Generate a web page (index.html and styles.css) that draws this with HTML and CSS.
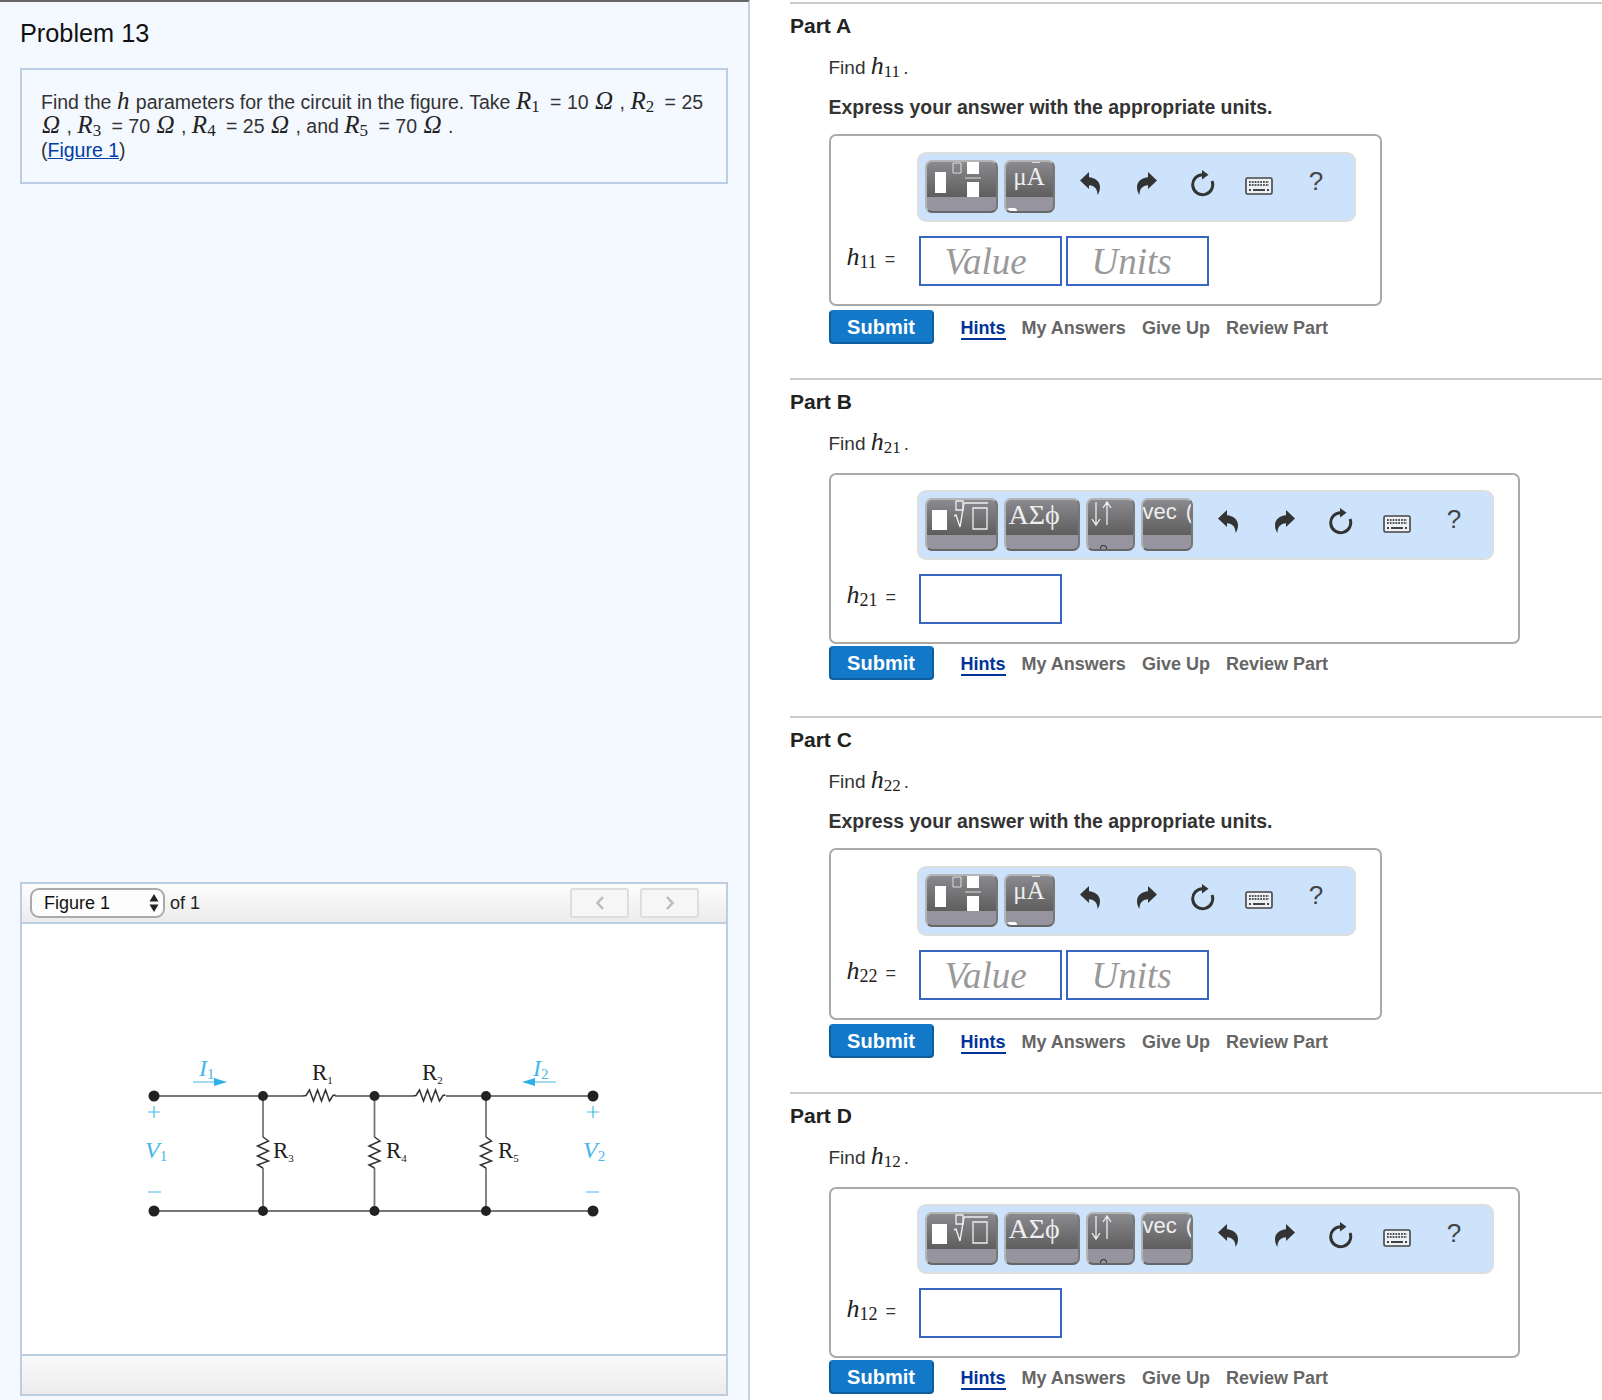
FILE: index.html
```html
<!DOCTYPE html>
<html lang="en">
<head>
<meta charset="utf-8">
<title>Problem 13</title>
<link rel="stylesheet" href="styles.css">
</head>
<body>
<svg class="defs" width="0" height="0" aria-hidden="true">
  <symbol id="undo" viewBox="0 0 20 23"><path d="M0 8.500 9 0v5.200c6 .4 11 4 11 10 0 3.500-1.200 6-2.500 7.800.3-5.500-3-9.500-8.500-9.700V17z"/></symbol>
  <symbol id="reload" viewBox="0 0 26 28"><path d="M11.700 5.700A10 10 0 1 0 21 12" fill="none" stroke="#333" stroke-width="3"/><path d="M11 1 17.500 5.700 11 10.500z"/></symbol>
  <symbol id="kbd" viewBox="0 0 28 18"><rect x="1" y="1" width="26" height="16" rx="1.500" fill="#eef2f6" stroke="#444" stroke-width="1.600"/><path d="M4 5h20M4 8h20" stroke="#555" stroke-width="1.800" stroke-dasharray="1.800 1"/><path d="M8 13h12M4 13h2M22 13h2" stroke="#444" stroke-width="1.800"/></symbol>
  <symbol id="frac" viewBox="0 0 69 36"><path d="M8 10h11v21H8zM40 0h12v12H40zM40 20h12v15H40z" fill="#fff"/><path d="M26 1h8v10h-8z" fill="none" stroke="#ddd"/><path d="M38 16h16" stroke="#ddd"/></symbol>
  <symbol id="root" viewBox="0 0 69 36"><path d="M5 10h15v20H5z" fill="#fff"/><path d="M29 1h7v9h-7zM46 8h14v21H46z" fill="none" stroke="#eee" stroke-width="1.300"/><path d="M27 16l2-1 4 12 4-24h24" fill="none" stroke="#eee" stroke-width="1.400"/></symbol>
  <symbol id="arrows" viewBox="0 0 45 34"><path d="M8 2v22M4 19l4 6 4-6M19 25V3M15 8l4-6 4 6" fill="none" stroke="#eee" stroke-width="1.300"/></symbol>
</svg>
<div class="page">
  <aside class="left">
    <h1 class="title">Problem 13</h1>
    <div class="desc">Find the <i class="m big">h</i> parameters for the circuit in the figure. Take <i class="m big">R<sub>1</sub></i> = 10 <i class="m om">Ω</i> , <i class="m big">R<sub>2</sub></i> = 25<br>
      <i class="m om">Ω</i> , <i class="m big">R<sub>3</sub></i> = 70 <i class="m om">Ω</i> , <i class="m big">R<sub>4</sub></i> = 25 <i class="m om">Ω</i> , and <i class="m big">R<sub>5</sub></i> = 70 <i class="m om">Ω</i> .<br>
      (<a class="link" href="#">Figure 1</a>)</div>
    <section class="figure">
      <div class="fig-head">
        <div class="select"><span>Figure 1</span><svg width="10" height="18" viewBox="0 0 10 18"><path d="M5 0l4.500 7.500h-9zM5 18 .5 10.500h9z" fill="#222"/></svg></div>
        <span class="of">of 1</span>
        <div class="nav"><svg width="10" height="16" viewBox="0 0 10 16"><path d="M8 2 2.500 8 8 14" fill="none" stroke="#bbb" stroke-width="2.500"/></svg></div>
        <div class="nav"><svg width="10" height="16" viewBox="0 0 10 16"><path d="M2 2 7.500 8 2 14" fill="none" stroke="#bbb" stroke-width="2.500"/></svg></div>
      </div>
      <div class="fig-body">
        <svg class="circuit" viewBox="22 924 704 432" width="704" height="432">
          <g fill="none" stroke="#777">
            <path stroke-width="2.200" d="M154 1096H303M335 1096H413M446 1096H593M154 1211H593"/>
            <path stroke-width="1.800" d="M263 1096V1137M263 1168V1211M374.500 1096V1137M374.500 1168V1211M486 1096V1137M486 1168V1211"/>
          </g>
          <g fill="none" stroke="#333" stroke-width="1.500">
            <path d="M303 1096l3-.5 3.500-5.500 4 11 4-11 4 11 4-11 4 11 3.500-5.500 2.500-.5"/>
            <path d="M413 1096l3-.5 3.500-5.500 4 11 4-11 4 11 4-11 4 11 3.500-5.500 2.500-.5"/>
            <path d="M263 1137l5.500 4-11 5 11 5-11 5 11 5-11 4 5.500 3"/>
            <path d="M374.500 1137l5.500 4-11 5 11 5-11 5 11 5-11 4 5.500 3"/>
            <path d="M486 1137l5.500 4-11 5 11 5-11 5 11 5-11 4 5.500 3"/>
          </g>
          <g fill="#222">
            <circle cx="154" cy="1096" r="5.500"/><circle cx="263" cy="1096" r="5"/><circle cx="374.500" cy="1096" r="5"/><circle cx="486" cy="1096" r="5"/><circle cx="593" cy="1096" r="5.500"/>
            <circle cx="154" cy="1211" r="5.500"/><circle cx="263" cy="1211" r="5"/><circle cx="374.500" cy="1211" r="5"/><circle cx="486" cy="1211" r="5"/><circle cx="593" cy="1211" r="5.500"/>
          </g>
          <g class="rl">
            <text x="312" y="1080">R<tspan class="rs" dy="4">1</tspan></text>
            <text x="422" y="1080">R<tspan class="rs" dy="4">2</tspan></text>
            <text x="273" y="1158">R<tspan class="rs" dy="4">3</tspan></text>
            <text x="386" y="1158">R<tspan class="rs" dy="4">4</tspan></text>
            <text x="498" y="1158">R<tspan class="rs" dy="4">5</tspan></text>
          </g>
          <g class="cl">
            <text x="199" y="1076">I<tspan class="cs" dy="3">1</tspan></text>
            <text x="533" y="1076">I<tspan class="cs" dy="3">2</tspan></text>
            <text x="145" y="1158">V<tspan class="cs" dy="3">1</tspan></text>
            <text x="583" y="1158">V<tspan class="cs" dy="3">2</tspan></text>
          </g>
          <g fill="none" stroke="#46b8e8" stroke-width="1.200">
            <path d="M193 1082h22M534 1082h22M148 1112h12M154 1106v12M587 1112h12M593 1106v12M148 1192h13M586 1192h13"/>
          </g>
          <path d="M214 1078l13 4-13 4zM535 1078l-13 4 13 4z" fill="#2fb0e8"/>
        </svg>
      </div>
      <div class="fig-foot"></div>
    </section>
  </aside>
  <main class="right">

    <section class="part">
      <h2>Part A</h2>
      <div class="body">
        <p class="find">Find <i class="m h">h<sub>11</sub></i>.</p>
        <p class="express">Express your answer with the appropriate units.</p>
        <div class="box">
          <div class="toolbar">
            <div class="btn w73"><svg width="69" height="36"><use href="#frac"/></svg></div>
            <div class="btn w51"><span class="serif">μ<span class="over">A</span></span><span class="mark"></span></div>
            <div class="tools">
              <span class="tool"><svg class="ic" width="20" height="23"><use href="#undo"/></svg></span>
              <span class="tool"><svg class="ic flip" width="20" height="23"><use href="#undo"/></svg></span>
              <span class="tool"><svg class="ic" width="26" height="28"><use href="#reload"/></svg></span>
              <span class="tool"><svg class="ic kb" width="28" height="18"><use href="#kbd"/></svg></span>
              <span class="tool q">?</span>
            </div>
          </div>
          <div class="answer">
            <span class="lab"><i class="m h">h<sub>11</sub></i> =</span>
            <span class="input">Value</span><span class="input">Units</span>
          </div>
        </div>
        <div class="actions"><span class="submit">Submit</span><a class="hint" href="#">Hints</a><span>My Answers</span><span>Give Up</span><span>Review Part</span></div>
      </div>
    </section>

    <section class="part">
      <h2>Part B</h2>
      <div class="body">
        <p class="find">Find <i class="m h">h<sub>21</sub></i>.</p>
        <div class="box gap">
          <div class="toolbar">
            <div class="btn w73"><svg width="69" height="36"><use href="#root"/></svg></div>
            <div class="btn w76"><span class="serif greek">ΑΣϕ</span></div>
            <div class="btn w49"><svg width="45" height="34"><use href="#arrows"/></svg><span class="arc"></span></div>
            <div class="btn w52"><span class="vec">vec (</span></div>
            <div class="tools">
              <span class="tool"><svg class="ic" width="20" height="23"><use href="#undo"/></svg></span>
              <span class="tool"><svg class="ic flip" width="20" height="23"><use href="#undo"/></svg></span>
              <span class="tool"><svg class="ic" width="26" height="28"><use href="#reload"/></svg></span>
              <span class="tool"><svg class="ic kb" width="28" height="18"><use href="#kbd"/></svg></span>
              <span class="tool q">?</span>
            </div>
          </div>
          <div class="answer">
            <span class="lab"><i class="m h">h<sub>21</sub></i> =</span>
            <span class="input"></span>
          </div>
        </div>
        <div class="actions"><span class="submit">Submit</span><a class="hint" href="#">Hints</a><span>My Answers</span><span>Give Up</span><span>Review Part</span></div>
      </div>
    </section>

    <section class="part">
      <h2>Part C</h2>
      <div class="body">
        <p class="find">Find <i class="m h">h<sub>22</sub></i>.</p>
        <p class="express">Express your answer with the appropriate units.</p>
        <div class="box">
          <div class="toolbar">
            <div class="btn w73"><svg width="69" height="36"><use href="#frac"/></svg></div>
            <div class="btn w51"><span class="serif">μ<span class="over">A</span></span><span class="mark"></span></div>
            <div class="tools">
              <span class="tool"><svg class="ic" width="20" height="23"><use href="#undo"/></svg></span>
              <span class="tool"><svg class="ic flip" width="20" height="23"><use href="#undo"/></svg></span>
              <span class="tool"><svg class="ic" width="26" height="28"><use href="#reload"/></svg></span>
              <span class="tool"><svg class="ic kb" width="28" height="18"><use href="#kbd"/></svg></span>
              <span class="tool q">?</span>
            </div>
          </div>
          <div class="answer">
            <span class="lab"><i class="m h">h<sub>22</sub></i> =</span>
            <span class="input">Value</span><span class="input">Units</span>
          </div>
        </div>
        <div class="actions"><span class="submit">Submit</span><a class="hint" href="#">Hints</a><span>My Answers</span><span>Give Up</span><span>Review Part</span></div>
      </div>
    </section>

    <section class="part">
      <h2>Part D</h2>
      <div class="body">
        <p class="find">Find <i class="m h">h<sub>12</sub></i>.</p>
        <div class="box gap">
          <div class="toolbar">
            <div class="btn w73"><svg width="69" height="36"><use href="#root"/></svg></div>
            <div class="btn w76"><span class="serif greek">ΑΣϕ</span></div>
            <div class="btn w49"><svg width="45" height="34"><use href="#arrows"/></svg><span class="arc"></span></div>
            <div class="btn w52"><span class="vec">vec (</span></div>
            <div class="tools">
              <span class="tool"><svg class="ic" width="20" height="23"><use href="#undo"/></svg></span>
              <span class="tool"><svg class="ic flip" width="20" height="23"><use href="#undo"/></svg></span>
              <span class="tool"><svg class="ic" width="26" height="28"><use href="#reload"/></svg></span>
              <span class="tool"><svg class="ic kb" width="28" height="18"><use href="#kbd"/></svg></span>
              <span class="tool q">?</span>
            </div>
          </div>
          <div class="answer">
            <span class="lab"><i class="m h">h<sub>12</sub></i> =</span>
            <span class="input"></span>
          </div>
        </div>
        <div class="actions"><span class="submit">Submit</span><a class="hint" href="#">Hints</a><span>My Answers</span><span>Give Up</span><span>Review Part</span></div>
      </div>
    </section>

  </main>
</div>
</body>
</html>
```
FILE: styles.css
```css
* { box-sizing: border-box; }
html, body { margin: 0; padding: 0; background: #fff; }
body { font-family: "Liberation Sans", Arial, sans-serif; color: #222; font-size: 18px; }
.defs { position: absolute; }
.page { display: flex; height: 1400px; overflow: hidden; }

.left { width: 750px; flex: none; background: #f4f8ff; border-top: 2px solid #666; border-right: 2px solid #c5d3e0; display: flex; flex-direction: column; padding: 0 20px 4px 20px; }
.title { margin: 16px 0 0; font-size: 25.300px; font-weight: 400; line-height: 30px; color: #111; }
.desc { margin-top: 20px; height: 116px; border: 2px solid #bccfe2; padding: 20px 19px; line-height: 24px; font-size: 19.500px; color: #333; white-space: nowrap; }
.m { font-family: "Liberation Serif", "DejaVu Serif", serif; font-style: italic; color: #222; }
.m.big { font-size: 25px; line-height: 0; margin-right: 1px; }
.m.big sub { margin-right: 4px; }
.m.om { font-size: 25px; line-height: 0; margin: 0 1px; }
.m sub { font-size: 17px; font-style: normal; line-height: 0; vertical-align: -3px; }
.link { color: #003da5; text-decoration: underline; }

.figure { margin-top: auto; height: 514px; border: 2px solid #bccfe2; display: flex; flex-direction: column; background: #fff; }
.fig-head { height: 40px; flex: none; display: flex; align-items: center; padding-left: 8px; border-bottom: 2px solid #bccfe2; background: linear-gradient(#fdfdfd, #ececec); }
.select { width: 135px; height: 30px; border: 2px solid #aaa; border-radius: 9px; background: #fdfdfd; display: flex; align-items: center; justify-content: space-between; padding: 0 4px 0 12px; font-size: 18px; color: #111; }
.of { margin-left: 5px; font-size: 18px; color: #222; }
.nav { width: 59px; height: 30px; border: 2px solid #ddd; border-radius: 3px; display: flex; align-items: center; justify-content: center; background: #f6f6f6; }
.of + .nav { margin-left: auto; }
.nav + .nav { margin: 0 27px 0 11px; }
.fig-body { flex: 1; min-height: 0; }
.circuit { display: block; }
.rl text { font-family: "Liberation Serif", serif; font-size: 23px; fill: #222; }
.rl .rs { font-size: 11px; }
.cl text { font-family: "Liberation Serif", serif; font-style: italic; font-size: 24px; fill: #46b8e8; }
.cl .cs { font-size: 15px; font-style: normal; }
.fig-foot { height: 40px; flex: none; border-top: 2px solid #bccfe2; background: linear-gradient(#fafafa, #ececec); }

.right { flex: 1; min-width: 0; padding: 2px 0 0 40px; }
.part { border-top: 2px solid #ccc; padding-top: 10px; height: 338px; }
.part:first-child { height: 376px; }
.part:nth-child(3) { height: 376px; }
.part:nth-child(4) { height: 340px; }
.part h2 { margin: 0; font-size: 21px; line-height: 24px; font-weight: 700; color: #222; }
.body { padding-left: 38.500px; }
.find { margin: 18px 0 0; line-height: 24px; font-size: 19px; color: #333; }
.m.h { font-size: 26px; line-height: 0; margin-right: 3px; }
.lab .m.h sub { font-size: 18px; }
.express { margin: 15px 0 0; line-height: 24px; font-size: 19.450px; font-weight: 700; color: #333; }
.box { margin-top: 15px; display: table; border: 2px solid #aaa; border-radius: 7px; background: #fff; padding: 16px 24px 18px 16px; height: 171px; }
.box.gap { margin-top: 17px; height: 170px; padding-top: 15px; }
.toolbar { margin-left: 70px; height: 70px; display: flex; align-items: flex-start; gap: 6px; padding: 6px 7px 0 6px; background: #cde3fc; border: 2px solid #dedede; border-radius: 9px; }
.btn { position: relative; height: 53px; flex: none; overflow: hidden; border: 2px solid #b4b4b4; border-bottom-color: #666; border-right-color: #777; border-radius: 7px; color: #eee; background: linear-gradient(#8a8a8f 0, #5f5f5f 34px, #5f5f5f 35px, #96959f 35px); display: block; }
.btn svg { display: block; margin: 0; }
.w73 { width: 73px; } .w51 { width: 51px; } .w76 { width: 76px; } .w49 { width: 49px; } .w52 { width: 52px; }
.serif { display: block; font-family: "Liberation Serif", serif; font-size: 28px; line-height: 30px; text-align: center; color: #eee; }
.w51 .serif { font-size: 25px; }
.greek { text-align: left; padding-left: 3px; white-space: nowrap; }
.over { display: inline-block; position: relative; }
.over::before { content: ""; position: absolute; left: 5px; right: 5px; top: 0; height: 1px; background: #ddd; }
.vec { display: block; white-space: nowrap; font-size: 22px; word-spacing: 3px; line-height: 24px; color: #eee; }
.mark { position: absolute; left: 1px; bottom: 0; width: 10px; height: 3px; background: #fff; border-radius: 5px 5px 0 0; }
.arc { position: absolute; left: 12px; bottom: 0; width: 7px; height: 4px; border: 1px solid #333; border-bottom: 0; border-radius: 4px 4px 0 0; }
.tools { display: flex; align-items: center; height: 46px; margin-left: 1px; }
.tool { width: 57px; height: 46px; display: flex; align-items: center; justify-content: center; color: #444; fill: #333; }
.flip { transform: scaleX(-1); }
.kb { margin: 6px 4px 0 0; }
.q { font-size: 26px; padding: 0 4px 4px 0; }
.answer { display: flex; align-items: center; margin-top: 14px; height: 50px; }
.lab { width: 72px; flex: none; font-size: 18px; color: #333; padding-bottom: 4px; }
.input { width: 143px; height: 50px; border: 2px solid #3a66c4; background: #fff; margin-right: 4px; font-family: "Liberation Serif", serif; font-style: italic; font-size: 37px; line-height: 48px; color: #999; padding-left: 24px; }
.actions { display: flex; align-items: center; gap: 16px; margin-top: 4px; font-weight: 700; font-size: 18px; color: #666; }
.gap + .actions { margin-top: 2px; }
.actions span:not(.submit), .hint { padding-top: 3px; }
.submit { width: 105px; height: 34px; margin-right: 11px; border: 2px solid #0e5d9c; border-top-color: #1279c9; border-radius: 4px; background: #1279c9; color: #fff; font-size: 20px; line-height: 30px; text-align: center; }
.hint { color: #003399; text-decoration: none; border-bottom: 2px solid #003399; line-height: 20px; }
```
